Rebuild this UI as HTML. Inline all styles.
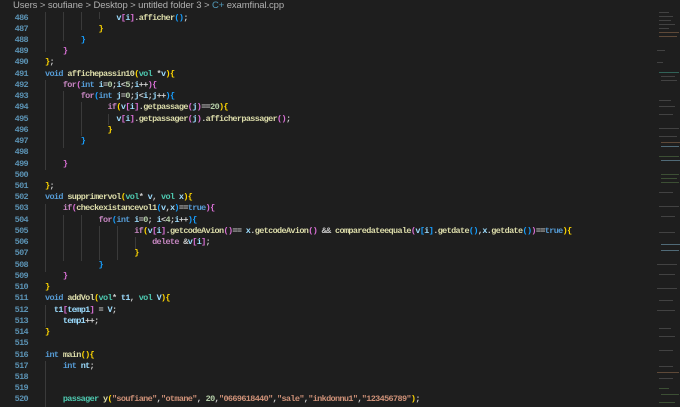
<!DOCTYPE html>
<html><head><style>
html,body{margin:0;padding:0;background:#1e1e1e;width:680px;height:407px;overflow:hidden}
.bc{position:absolute;left:0;top:0;height:12px;width:680px;font:9.5px "Liberation Sans",sans-serif;color:#b0b0b0;line-height:11px;padding-left:13px;box-sizing:border-box;white-space:pre;letter-spacing:-0.1px}
.ln{position:absolute;left:0;top:12.5px;width:28px;text-align:right;font:bold 8.5px "Liberation Mono",monospace;letter-spacing:-0.65px;line-height:11.24px;color:#5b92b3;white-space:pre}
.code{position:absolute;left:45px;top:12.5px;font:bold 8.5px "Liberation Mono",monospace;letter-spacing:-0.64px;line-height:11.24px;color:#cfcfcf;white-space:pre}
.k{color:#569cd6}.c{color:#c586c0}.f{color:#dcdcaa}.v{color:#9cdcfe}.n{color:#b5cea8}.s{color:#ce9178}.t{color:#4ec9b0}
.y{color:#ffd700}.p{color:#da70d6}.b{color:#179fff}
.g{position:absolute;width:1px;background:#3a3a3a}
.mm{position:absolute;left:655px;top:10px;width:25px;height:397px;opacity:.8}
.mm i{position:absolute;height:1px;background:#7a7a7a;opacity:.5}
</style></head><body>
<div class="bc">Users &gt; soufiane &gt; Desktop &gt; untitled folder 3 &gt; <span style="color:#519aba">C+</span> examfinal.cpp</div>
<div class="g" style="left:45px;top:12px;height:40px"></div>
<div class="g" style="left:63px;top:12px;height:29px"></div>
<div class="g" style="left:81px;top:12px;height:18px"></div>
<div class="g" style="left:99px;top:12px;height:7px"></div>
<div class="g" style="left:45px;top:80px;height:90px"></div>
<div class="g" style="left:63px;top:91px;height:57px"></div>
<div class="g" style="left:81px;top:102px;height:34px"></div>
<div class="g" style="left:108px;top:114px;height:11px"></div>
<div class="g" style="left:45px;top:204px;height:68px"></div>
<div class="g" style="left:63px;top:215px;height:46px"></div>
<div class="g" style="left:81px;top:215px;height:46px"></div>
<div class="g" style="left:99px;top:226px;height:34px"></div>
<div class="g" style="left:117px;top:226px;height:34px"></div>
<div class="g" style="left:135px;top:237px;height:12px"></div>
<div class="g" style="left:45px;top:305px;height:22px"></div>
<div class="g" style="left:45px;top:361px;height:46px"></div>
<div class="ln">486
487
488
489
490
491
492
493
494
495
496
497
498
499
500
501
502
503
504
505
506
507
508
509
510
511
512
513
514
515
516
517
518
519
520</div>
<div class="code">                <span class="v">v</span><span class="p">[</span><span class="v">i</span><span class="p">]</span>.<span class="f">afficher</span><span class="b">()</span>;
            <span class="y">}</span>
        <span class="b">}</span>
    <span class="p">}</span>
<span class="y">}</span>;
<span class="k">void</span> <span class="f">affichepassin10</span><span class="y">(</span><span class="t">vol</span> *<span class="v">v</span><span class="y">){</span>
    <span class="c">for</span><span class="p">(</span><span class="k">int</span> <span class="v">i</span>=<span class="n">0</span>;<span class="v">i</span>&lt;<span class="n">5</span>;<span class="v">i</span>++<span class="p">){</span>
        <span class="c">for</span><span class="b">(</span><span class="k">int</span> <span class="v">j</span>=<span class="n">0</span>;<span class="v">j</span>&lt;<span class="v">i</span>;<span class="v">j</span>++<span class="b">){</span>
              <span class="c">if</span><span class="y">(</span><span class="v">v</span><span class="p">[</span><span class="v">i</span><span class="p">]</span>.<span class="f">getpassage</span><span class="p">(</span><span class="v">j</span><span class="p">)</span>==<span class="n">20</span><span class="y">){</span>
                <span class="v">v</span><span class="p">[</span><span class="v">i</span><span class="p">]</span>.<span class="f">getpassager</span><span class="p">(</span><span class="v">j</span><span class="p">)</span>.<span class="f">afficherpassager</span><span class="p">()</span>;
              <span class="y">}</span>
        <span class="b">}</span>

    <span class="p">}</span>

<span class="y">}</span>;
<span class="k">void</span> <span class="f">supprimervol</span><span class="y">(</span><span class="t">vol</span>* <span class="v">v</span>, <span class="t">vol</span> <span class="v">x</span><span class="y">){</span>
    <span class="c">if</span><span class="p">(</span><span class="f">checkexistancevol1</span><span class="b">(</span><span class="v">v</span>,<span class="v">x</span><span class="b">)</span>==<span class="k">true</span><span class="p">){</span>
            <span class="c">for</span><span class="b">(</span><span class="k">int</span> <span class="v">i</span>=<span class="n">0</span>; <span class="v">i</span>&lt;<span class="n">4</span>;<span class="v">i</span>++<span class="b">){</span>
                    <span class="c">if</span><span class="y">(</span><span class="v">v</span><span class="p">[</span><span class="v">i</span><span class="p">]</span>.<span class="f">getcodeAvion</span><span class="p">()</span>== <span class="v">x</span>.<span class="f">getcodeAvion</span><span class="p">()</span> &amp;&amp; <span class="f">comparedateequale</span><span class="p">(</span><span class="v">v</span><span class="b">[</span><span class="v">i</span><span class="b">]</span>.<span class="f">getdate</span><span class="b">()</span>,<span class="v">x</span>.<span class="f">getdate</span><span class="b">()</span><span class="p">)</span>==<span class="k">true</span><span class="y">){</span>
                        <span class="c">delete</span> &amp;<span class="v">v</span><span class="p">[</span><span class="v">i</span><span class="p">]</span>;
                    <span class="y">}</span>
            <span class="b">}</span>
    <span class="p">}</span>
<span class="y">}</span>
<span class="k">void</span> <span class="f">addVol</span><span class="y">(</span><span class="t">vol</span>* <span class="v">t1</span>, <span class="t">vol</span> <span class="v">V</span><span class="y">){</span>
  <span class="v">t1</span><span class="p">[</span><span class="v">temp1</span><span class="p">]</span> = <span class="v">V</span>;
    <span class="v">temp1</span>++;
<span class="y">}</span>

<span class="k">int</span> <span class="f">main</span><span class="y">(){</span>
    <span class="k">int</span> <span class="v">nt</span>;


    <span class="t">passager</span> <span class="f">y</span><span class="y">(</span><span class="s">"soufiane"</span>,<span class="s">"otmane"</span>, <span class="n">20</span>,<span class="s">"0669618440"</span>,<span class="s">"sale"</span>,<span class="s">"inkdonnu1"</span>,<span class="s">"123456789"</span><span class="y">)</span>;</div>
<div class="mm">
<i style="left:4px;top:2px;width:10px"></i><i style="left:4px;top:6px;width:14px"></i><i style="left:4px;top:10px;width:12px"></i><i style="left:4px;top:14px;width:16px"></i><i style="left:4px;top:18px;width:10px"></i><i style="left:4px;top:22px;width:20px;background:#c08a60"></i><i style="left:4px;top:26px;width:18px;background:#c08a60"></i><i style="left:2px;top:40px;width:8px"></i><i style="left:2px;top:52px;width:6px"></i><i style="left:4px;top:62px;width:20px;background:#4ec9b0"></i><i style="left:6px;top:66px;width:14px"></i><i style="left:6px;top:70px;width:16px"></i><i style="left:4px;top:90px;width:12px"></i><i style="left:4px;top:96px;width:16px"></i><i style="left:4px;top:104px;width:14px"></i><i style="left:4px;top:118px;width:20px"></i><i style="left:4px;top:126px;width:18px"></i><i style="left:6px;top:132px;width:20px;background:#c08a60"></i><i style="left:6px;top:136px;width:18px;background:#9cdcfe"></i><i style="left:4px;top:146px;width:20px;background:#6a9955"></i><i style="left:6px;top:150px;width:20px;background:#9cdcfe"></i><i style="left:6px;top:164px;width:18px;background:#6a9955"></i><i style="left:6px;top:168px;width:16px;background:#6a9955"></i><i style="left:6px;top:172px;width:18px;background:#6a9955"></i><i style="left:4px;top:182px;width:14px"></i><i style="left:4px;top:196px;width:20px"></i><i style="left:6px;top:206px;width:14px"></i><i style="left:4px;top:222px;width:16px"></i><i style="left:6px;top:234px;width:20px;background:#9cdcfe"></i><i style="left:6px;top:240px;width:18px;background:#9cdcfe"></i><i style="left:2px;top:254px;width:20px"></i><i style="left:4px;top:264px;width:16px"></i><i style="left:2px;top:278px;width:20px"></i><i style="left:4px;top:290px;width:14px"></i><i style="left:2px;top:300px;width:18px"></i><i style="left:4px;top:318px;width:12px"></i><i style="left:4px;top:326px;width:16px"></i><i style="left:4px;top:340px;width:14px"></i><i style="left:4px;top:356px;width:14px"></i><i style="left:2px;top:362px;width:22px;background:#c08a60"></i><i style="left:4px;top:368px;width:14px"></i><i style="left:4px;top:378px;width:10px;background:#6a9955"></i><i style="left:6px;top:384px;width:18px;background:#6a9955"></i><i style="left:4px;top:392px;width:16px;background:#6a9955"></i>
</div>
</body></html>
